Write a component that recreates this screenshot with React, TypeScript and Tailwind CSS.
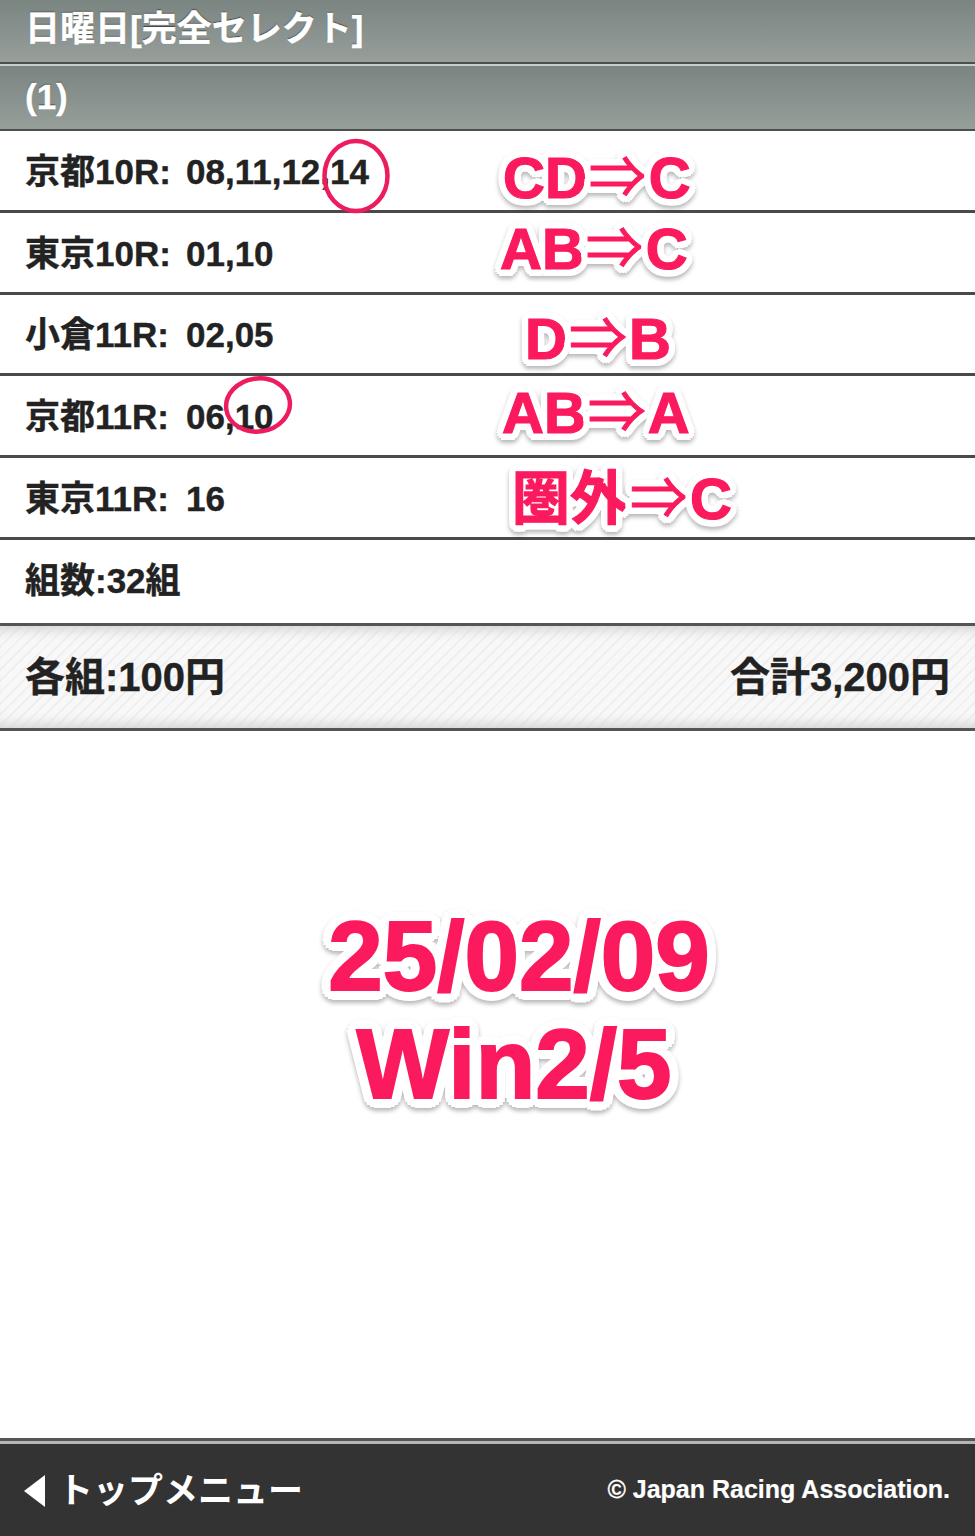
const font = 'font-["Liberation_Sans","Noto_Sans_CJK_JP",sans-serif]';

const rows = [
  { name: '京都10R:', nums: '08,11,12,14' },
  { name: '東京10R:', nums: '01,10' },
  { name: '小倉11R:', nums: '02,05' },
  { name: '京都11R:', nums: '06,10' },
  { name: '東京11R:', nums: '16' },
];

const notes = [
  { from: 'CD', to: 'C', left: 'left-[503px]', top: 'top-[145px]' },
  { from: 'AB', to: 'C', left: 'left-[500px]', top: 'top-[216px]' },
  { from: 'D', to: 'B', left: 'left-[525px]', top: 'top-[306px]' },
  { from: 'AB', to: 'A', left: 'left-[502px]', top: 'top-[380px]' },
  { from: '圏外', to: 'C', left: 'left-[512px]', top: 'top-[466px]' },
];

function Band({ children, className }: { children: React.ReactNode; className: string }) {
  return (
    <div className={`flex items-center bg-gradient-to-b from-[#7a8480] to-[#979f9b] px-[25px] text-[35px] font-bold text-white [text-shadow:0_-1px_1px_rgba(0,0,0,0.55)] [-webkit-text-stroke:0.4px_white] ${className}`}>
      {children}
    </div>
  );
}

export default function App() {
  return (
    <div className={`relative flex h-[1536px] w-[975px] flex-col overflow-hidden bg-white text-[#222] ${font}`}>
      <Band className="h-[62px] pb-[3px]">日曜日[完全セレクト]</Band>
      <div className="h-[2px] bg-[#4b4f4d]" />
      <div className="h-[2px] bg-[#c9cecb]" />
      <Band className="h-[63px]">(1)</Band>
      <div className="h-[2px] bg-[#4b4f4d]" />

      {rows.map((row) => (
        <div
          key={row.name}
          className="flex h-[81.8px] items-center gap-[15px] border-b-[3px] border-[#4a4a4a] px-[25px] pt-[2px] text-[35px] leading-none font-bold [-webkit-text-stroke:0.4px_#222]"
        >
          <span className="w-[146px]">{row.name}</span>
          <span>{row.nums}</span>
        </div>
      ))}

      <div className="flex h-[83px] items-center px-[25px] text-[35px] font-bold [-webkit-text-stroke:0.4px_#222]">組数:32組</div>

      <div className="flex h-[108px] items-center justify-between border-y-[3px] border-[#555] bg-[repeating-linear-gradient(135deg,#f8f8f8_0px,#f8f8f8_6px,#efefef_6px,#efefef_8px)] px-[25px] text-[40px] font-bold shadow-[inset_0_14px_12px_-10px_#d4d4d4,inset_0_-14px_12px_-10px_#d4d4d4] [-webkit-text-stroke:0.4px_#222]">
        <span>各組:100円</span>
        <span>合計3,200円</span>
      </div>

      <div className="flex-1" />

      <div className="h-[3px] bg-[#555]" />
      <div className="h-[3px] bg-[#b5b5b5]" />
      <div className="flex h-[92px] items-center justify-between bg-[#333] pr-[25px] pl-[24px] text-white">
        <div className="flex items-center gap-[13px] pt-[2px]">
          <svg width="21" height="32" viewBox="0 0 21 32" aria-hidden="true">
            <path d="M21 0V32L0 16Z" fill="#fff" />
          </svg>
          <span className="text-[35px] font-bold">トップメニュー</span>
        </div>
        <span className="text-[25px] font-bold [-webkit-text-stroke:0.2px_white]">© Japan Racing Association.</span>
      </div>

      {/* hand-drawn circles on top of the numbers */}
      <svg className="absolute top-[136px] left-[318px]" width="76" height="82" viewBox="0 0 76 82" fill="none" aria-hidden="true">
        <ellipse cx="38" cy="40" rx="31.5" ry="35" stroke="#ec1c5e" strokeWidth="4.5" />
      </svg>
      <svg className="absolute top-[372px] left-[220px]" width="76" height="68" viewBox="0 0 76 68" fill="none" aria-hidden="true">
        <ellipse cx="38" cy="33" rx="32" ry="26.5" transform="rotate(-8 38 33)" stroke="#ec1c5e" strokeWidth="4.5" />
      </svg>

      {notes.map((note) => (
        <div
          key={note.from + note.to + note.top}
          className={`absolute ${note.left} ${note.top} text-[58px] leading-[66px] font-bold whitespace-nowrap text-[#fb1a5d] [-webkit-text-stroke:1.2px_#fb1a5d] [text-shadow:7px_0_0_#fff,-7px_0_0_#fff,0_7px_0_#fff,0_-7px_0_#fff,5px_5px_0_#fff,-5px_5px_0_#fff,5px_-5px_0_#fff,-5px_-5px_0_#fff,6.5px_2.7px_0_#fff,-6.5px_2.7px_0_#fff,6.5px_-2.7px_0_#fff,-6.5px_-2.7px_0_#fff,2.7px_6.5px_0_#fff,-2.7px_6.5px_0_#fff,2.7px_-6.5px_0_#fff,-2.7px_-6.5px_0_#fff] drop-shadow-[0_3px_2px_rgba(0,0,0,0.28)]`}
        >
          {note.from}
          <span className="mx-[2px] font-normal [-webkit-text-stroke:1px_#fb1a5d]">⇒</span>
          {note.to}
        </div>
      ))}

      <div className="absolute top-[902px] left-[318px] w-[402px] text-center text-[98px] leading-[108px] font-bold text-[#fb1a5d] [-webkit-text-stroke:2px_#fb1a5d] [text-shadow:10px_0_0_#fff,-10px_0_0_#fff,0_10px_0_#fff,0_-10px_0_#fff,7px_7px_0_#fff,-7px_7px_0_#fff,7px_-7px_0_#fff,-7px_-7px_0_#fff,9.2px_3.8px_0_#fff,-9.2px_3.8px_0_#fff,9.2px_-3.8px_0_#fff,-9.2px_-3.8px_0_#fff,3.8px_9.2px_0_#fff,-3.8px_9.2px_0_#fff,3.8px_-9.2px_0_#fff,-3.8px_-9.2px_0_#fff] drop-shadow-[0_3px_2px_rgba(0,0,0,0.28)]">
        <div>25/02/09</div>
        <div className="pr-[10px]">Win2/5</div>
      </div>
    </div>
  );
}
